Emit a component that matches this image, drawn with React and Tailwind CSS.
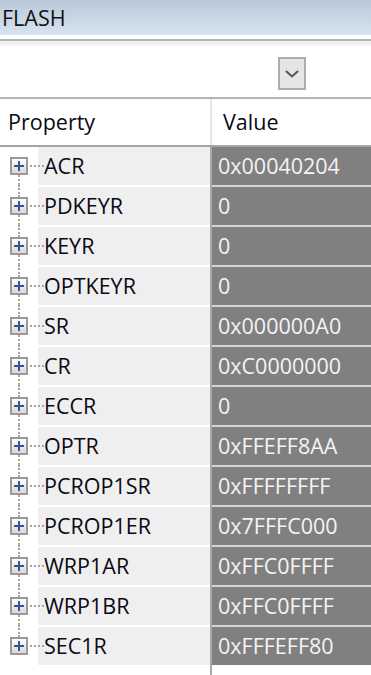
import React from 'react';

const registers = [
  { name: 'ACR', value: '0x00040204' },
  { name: 'PDKEYR', value: '0' },
  { name: 'KEYR', value: '0' },
  { name: 'OPTKEYR', value: '0' },
  { name: 'SR', value: '0x000000A0' },
  { name: 'CR', value: '0xC0000000' },
  { name: 'ECCR', value: '0' },
  { name: 'OPTR', value: '0xFFEFF8AA' },
  { name: 'PCROP1SR', value: '0xFFFFFFFF' },
  { name: 'PCROP1ER', value: '0x7FFFC000' },
  { name: 'WRP1AR', value: '0xFFC0FFFF' },
  { name: 'WRP1BR', value: '0xFFC0FFFF' },
  { name: 'SEC1R', value: '0xFFFEFF80' },
];

const ExpandBox = () => (
  <div className="absolute left-[10px] top-[10px] w-[18px] h-[18px] border-2 border-[#9a9a9a] bg-gradient-to-b from-white to-[#d9d9d9] flex items-center justify-center">
    <div className="relative w-[10px] h-[10px]">
      <div className="absolute left-0 top-[4px] w-[10px] h-[2px] bg-[#34559a]" />
      <div className="absolute left-[4px] top-0 w-[2px] h-[10px] bg-[#34559a]" />
    </div>
  </div>
);

const RegisterRow = ({ reg, first, last }) => (
  <div className="flex h-[38px]">
    <div className="relative w-[38px] shrink-0 bg-white">
      {!first && <div className="absolute left-[18px] -top-[2px] h-[12px] border-l-2 border-dotted border-[#a5a5a5]" />}
      {!last && <div className="absolute left-[18px] top-[28px] h-[10px] border-l-2 border-dotted border-[#a5a5a5]" />}
      <div className="absolute left-[30px] top-[18px] w-[14px] border-t-2 border-dotted border-[#a5a5a5] z-10" />
      <ExpandBox />
    </div>
    <div className="w-[172px] shrink-0 bg-[#efefef] pl-[6px] flex items-center text-[#0a0a14]">{reg.name}</div>
    <div className="w-[2px] shrink-0 bg-[#a8a8a8]" />
    <div className="flex-1 bg-[#808080] pl-[6px] flex items-center text-[#f4f4f4]">{reg.value}</div>
  </div>
);

const RowGap = () => (
  <div className="flex h-[2px]">
    <div className="w-[210px] bg-white" />
    <div className="w-[2px] bg-[#a8a8a8]" />
    <div className="flex-1 bg-[#d4d4d4]" />
  </div>
);

export default function App() {
  return (
    <div className="w-[371px] h-[675px] overflow-hidden bg-white flex flex-col text-[21.5px] leading-none" style={{ fontFamily: '"Segoe UI", "Open Sans", sans-serif' }}>
      <div className="h-[35px] shrink-0 bg-gradient-to-b from-[#b9c9d9] to-[#d7e3ef] flex items-center pl-[2px] text-[#111]">
        FLASH
      </div>
      <div className="h-[4px] shrink-0 bg-white" />
      <div className="h-[2px] shrink-0 bg-[#b4b4b4]" />
      <div className="h-[4px] shrink-0 bg-[#f0f0f0]" />

      <div className="h-[52px] shrink-0 bg-white flex justify-end items-start pt-[12px] pr-[65px]">
        <button className="w-[28px] h-[33px] border-2 border-[#adadad] bg-[#e5e5e5] flex items-center justify-center">
          <svg width="14" height="8" viewBox="0 0 14 8" fill="none">
            <path d="M1 1 L7 6.5 L13 1" stroke="#555" strokeWidth="2" />
          </svg>
        </button>
      </div>
      <div className="h-[2px] shrink-0 bg-[#b4b4b4]" />

      <div className="h-[46px] shrink-0 flex bg-white text-[#0a0a14]">
        <div className="w-[210px] pl-[8px] flex items-center">Property</div>
        <div className="w-[2px] bg-[#e6e6e6]" />
        <div className="flex-1 pl-[11px] flex items-center">Value</div>
      </div>
      <div className="h-[2px] shrink-0 bg-[#a5a5a5]" />

      <div className="flex flex-col">
        {registers.map((reg, i) => (
          <React.Fragment key={reg.name}>
            {i > 0 && <RowGap />}
            <RegisterRow reg={reg} first={i === 0} last={i === registers.length - 1} />
          </React.Fragment>
        ))}
      </div>

      <div className="flex-1 flex">
        <div className="w-[210px] bg-white" />
        <div className="w-[2px] bg-[#a8a8a8]" />
        <div className="flex-1 bg-white" />
      </div>
    </div>
  );
}
